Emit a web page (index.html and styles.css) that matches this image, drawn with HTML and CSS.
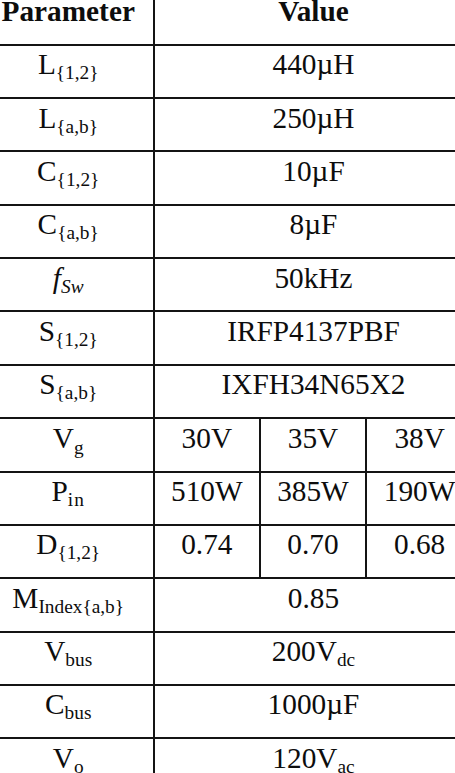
FILE: index.html
```html
<!DOCTYPE html>
<html lang="en">
<head>
<meta charset="utf-8">
<title>Parameters</title>
<link rel="stylesheet" href="styles.css">
</head>
<body>
<table class="params">
  <colgroup>
    <col class="col-param">
    <col class="col-v1">
    <col class="col-v2">
    <col class="col-v3">
  </colgroup>
  <thead>
    <tr><th>Parameter</th><th colspan="3">Value</th></tr>
  </thead>
  <tbody>
    <tr><td>L<sub>{1,2}</sub></td><td colspan="3">440µH</td></tr>
    <tr><td>L<sub>{a,b}</sub></td><td colspan="3">250µH</td></tr>
    <tr><td>C<sub>{1,2}</sub></td><td colspan="3">10µF</td></tr>
    <tr><td>C<sub>{a,b}</sub></td><td colspan="3">8µF</td></tr>
    <tr><td><i>f</i><sub><i>Sw</i></sub></td><td colspan="3">50kHz</td></tr>
    <tr><td>S<sub>{1,2}</sub></td><td colspan="3">IRFP4137PBF</td></tr>
    <tr><td>S<sub>{a,b}</sub></td><td colspan="3">IXFH34N65X2</td></tr>
    <tr><td>V<sub class="low">g</sub></td><td>30V</td><td>35V</td><td>38V</td></tr>
    <tr><td>P<sub class="wide">in</sub></td><td>510W</td><td>385W</td><td>190W</td></tr>
    <tr><td>D<sub>{1,2}</sub></td><td>0.74</td><td>0.70</td><td>0.68</td></tr>
    <tr><td>M<sub>Index{a,b}</sub></td><td colspan="3">0.85</td></tr>
    <tr><td>V<sub>bus</sub></td><td colspan="3">200V<sub>dc</sub></td></tr>
    <tr><td>C<sub>bus</sub></td><td colspan="3">1000µF</td></tr>
    <tr><td>V<sub>o</sub></td><td colspan="3">120V<sub>ac</sub></td></tr>
  </tbody>
</table>
</body>
</html>
```
FILE: styles.css
```css
html, body {
  margin: 0;
  padding: 0;
  background: #ffffff;
  overflow: hidden;
}

body {
  width: 455px;
  height: 773px;
}

.params {
  border-collapse: collapse;
  table-layout: fixed;
  width: 490px;
  margin: -9.6px 0 0 -18.6px;
  font-family: "Liberation Serif", "Times New Roman", serif;
  font-size: 29.3px;
  color: #0d0d0d;
}

.col-param { width: 171.6px; }
.col-v1 { width: 105.7px; }
.col-v2 { width: 106.6px; }
.col-v3 { width: 106.7px; }

.params th,
.params td {
  border: 2px solid #141414;
  height: 46.75px;
  padding: 4.6px 0 0;
  line-height: 1;
  text-align: center;
  vertical-align: top;
  white-space: nowrap;
}

.params th {
  font-weight: bold;
}

.params sub {
  font-size: 0.66em;
  line-height: 0;
  vertical-align: -4.5px;
}

.params sub.low {
  vertical-align: -6px;
}

.params sub.wide {
  letter-spacing: 1px;
}
```
